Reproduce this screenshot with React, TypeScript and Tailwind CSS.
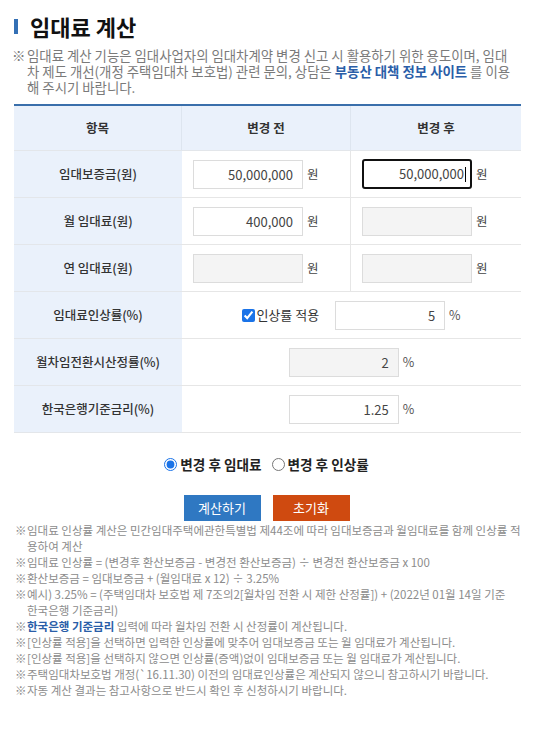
import React from "react";

const FONT = '"Noto Sans CJK KR", "Noto Sans", "Liberation Sans", sans-serif';

function Box({ value, disabled, focused }: { value?: string; disabled?: boolean; focused?: boolean }) {
  if (focused) {
    return (
      <div className="w-[110px] h-[30px] border-2 border-[#111] rounded-[3px] bg-white flex items-center justify-end pr-[4px] text-[13px] text-[#444]">
        <span>{value}</span>
        <span className="w-px h-[15px] bg-black ml-px" />
      </div>
    );
  }
  return (
    <input
      readOnly
      value={value ?? ""}
      className={
        "w-[110px] h-[29px] border border-[#dcdcdc] text-right pr-[9px] text-[13px] text-[#444] outline-none " +
        (disabled ? "bg-[#f4f4f4]" : "bg-white")
      }
    />
  );
}

function Label({ children }: { children: React.ReactNode }) {
  return (
    <div className="h-[47px] bg-[#eaf1fb] flex items-center justify-center border-b border-[#e3e6ea] text-[12.5px] font-medium text-[#333]">
      {children}
    </div>
  );
}

function MoneyCell({ value, disabled, focused, last }: { value?: string; disabled?: boolean; focused?: boolean; last?: boolean }) {
  return (
    <div className={"h-[47px] flex items-center pl-[11px] gap-[4px] border-b border-[#e6e6e6] " + (last ? "" : "border-r")}>
      <Box value={value} disabled={disabled} focused={focused} />
      <span className="text-[12.5px] text-[#444]">원</span>
    </div>
  );
}

function Note({ lines, children }: { lines?: string[]; children?: React.ReactNode }) {
  return (
    <div className="flex">
      <span className="w-[12px] shrink-0">※</span>
      <div className="whitespace-nowrap">
        {children}
        {lines?.map((l, i) => (
          <div key={i}>{l}</div>
        ))}
      </div>
    </div>
  );
}

export default function App() {
  return (
    <div className="w-[533px] min-h-[733px] bg-white pb-4" style={{ fontFamily: FONT }}>
      {/* Title */}
      <div className="pt-[14px] pl-[14px] flex items-center h-[38px]">
        <div className="w-[4px] h-[15px] bg-[#3470b5] mr-[12px]" />
        <h1 className="text-[22px] leading-[24px] font-bold text-[#111]">임대료 계산</h1>
      </div>

      {/* Notice */}
      <div className="mt-[9px] pl-[12px] flex text-[13.4px] leading-[16px] text-[#7a7a7a]">
        <span className="w-[15px] shrink-0">※</span>
        <div className="whitespace-nowrap">
          <div>임대료 계산 기능은 임대사업자의 임대차계약 변경 신고 시 활용하기 위한 용도이며, 임대</div>
          <div>
            차 제도 개선(개정 주택임대차 보호법) 관련 문의, 상담은{" "}
            <span className="font-bold text-[#2a5ea8]">부동산 대책 정보 사이트</span> 를 이용
          </div>
          <div>해 주시기 바랍니다.</div>
        </div>
      </div>

      {/* Table */}
      <div className="mt-[9px] ml-[14px] w-[507px] border-t-2 border-[#3a6fab]">
        <div className="grid grid-cols-[168px_169px_170px]">
          {/* header */}
          <div className="h-[45px] bg-[#eaf1fb] flex items-center justify-center border-r border-[#dde5ef] border-b border-b-[#e3e6ea] text-[12.5px] font-bold text-[#333]">항목</div>
          <div className="h-[45px] bg-[#eaf1fb] flex items-center justify-center border-r border-[#dde5ef] border-b border-b-[#e3e6ea] text-[12.5px] font-bold text-[#333]">변경 전</div>
          <div className="h-[45px] bg-[#eaf1fb] flex items-center justify-center border-b border-[#e3e6ea] text-[12.5px] font-bold text-[#333]">변경 후</div>

          {/* row 1 */}
          <Label>임대보증금(원)</Label>
          <MoneyCell value="50,000,000" />
          <MoneyCell value="50,000,000" focused last />

          {/* row 2 */}
          <Label>월 임대료(원)</Label>
          <MoneyCell value="400,000" />
          <MoneyCell disabled last />

          {/* row 3 */}
          <Label>연 임대료(원)</Label>
          <MoneyCell disabled />
          <MoneyCell disabled last />

          {/* row 4 */}
          <Label>임대료인상률(%)</Label>
          <div className="h-[47px] col-span-2 flex items-center justify-center border-b border-[#e6e6e6]">
            <label className="flex items-center text-[13px] text-[#333]">
              <input type="checkbox" defaultChecked className="w-[13px] h-[13px] m-0 accent-[#1a73e8]" />
              <span className="ml-px">인상률 적용</span>
            </label>
            <div className="ml-[16px]">
              <Box value="5" />
            </div>
            <span className="ml-[4px] text-[12.5px] text-[#555]">%</span>
          </div>

          {/* row 5 */}
          <Label>월차임전환시산정률(%)</Label>
          <div className="h-[47px] col-span-2 flex items-center justify-center border-b border-[#e6e6e6]">
            <Box value="2" disabled />
            <span className="ml-[4px] text-[12.5px] text-[#555]">%</span>
          </div>

          {/* row 6 */}
          <Label>한국은행기준금리(%)</Label>
          <div className="h-[47px] col-span-2 flex items-center justify-center border-b border-[#e6e6e6]">
            <Box value="1.25" />
            <span className="ml-[4px] text-[12.5px] text-[#555]">%</span>
          </div>
        </div>
      </div>

      {/* Radios */}
      <div className="mt-[21px] h-[20px] flex items-center justify-center gap-[10px] text-[13.6px] font-bold text-[#222]">
        <label className="flex items-center gap-[3px]">
          <input type="radio" name="mode" defaultChecked className="w-[13px] h-[13px] m-0 accent-[#1a73e8]" />
          <span>변경 후 임대료</span>
        </label>
        <label className="flex items-center gap-[3px]">
          <input type="radio" name="mode" className="w-[13px] h-[13px] m-0 accent-[#1a73e8]" />
          <span>변경 후 인상률</span>
        </label>
      </div>

      {/* Buttons */}
      <div className="mt-[21px] flex justify-center gap-[12px]">
        <button className="w-[77px] h-[26px] bg-[#2f78c2] text-white text-[13px]">계산하기</button>
        <button className="w-[77px] h-[26px] bg-[#cf4a10] text-white text-[13px]">초기화</button>
      </div>

      {/* Notes */}
      <div className="mt-[1px] pl-[15px] text-[11.5px] leading-[16px] text-[#8c8c8c]">
        <Note lines={["임대료 인상률 계산은 민간임대주택에관한특별법 제44조에 따라 임대보증금과 월임대료를 함께 인상률 적", "용하여 계산"]} />
        <Note lines={["임대료 인상률 = (변경후 환산보증금 - 변경전 환산보증금) ÷ 변경전 환산보증금 x 100"]} />
        <Note lines={["환산보증금 = 임대보증금 + (월임대료 x 12) ÷ 3.25%"]} />
        <Note lines={["예시) 3.25% = (주택임대차 보호법 제 7조의2[월차임 전환 시 제한 산정률]) + (2022년 01월 14일 기준", "한국은행 기준금리)"]} />
        <Note>
          <div>
            <span className="font-bold text-[#2a5ea8]">한국은행 기준금리</span> 입력에 따라 월차임 전환 시 산정률이 계산됩니다.
          </div>
        </Note>
        <Note lines={["[인상률 적용]을 선택하면 입력한 인상률에 맞추어 임대보증금 또는 월 임대료가 계산됩니다."]} />
        <Note lines={["[인상률 적용]을 선택하지 않으면 인상률(증액)없이 임대보증금 또는 월 임대료가 계산됩니다."]} />
        <Note lines={["주택임대차보호법 개정(`16.11.30) 이전의 임대료인상률은 계산되지 않으니 참고하시기 바랍니다."]} />
        <Note lines={["자동 계산 결과는 참고사항으로 반드시 확인 후 신청하시기 바랍니다."]} />
      </div>
    </div>
  );
}
